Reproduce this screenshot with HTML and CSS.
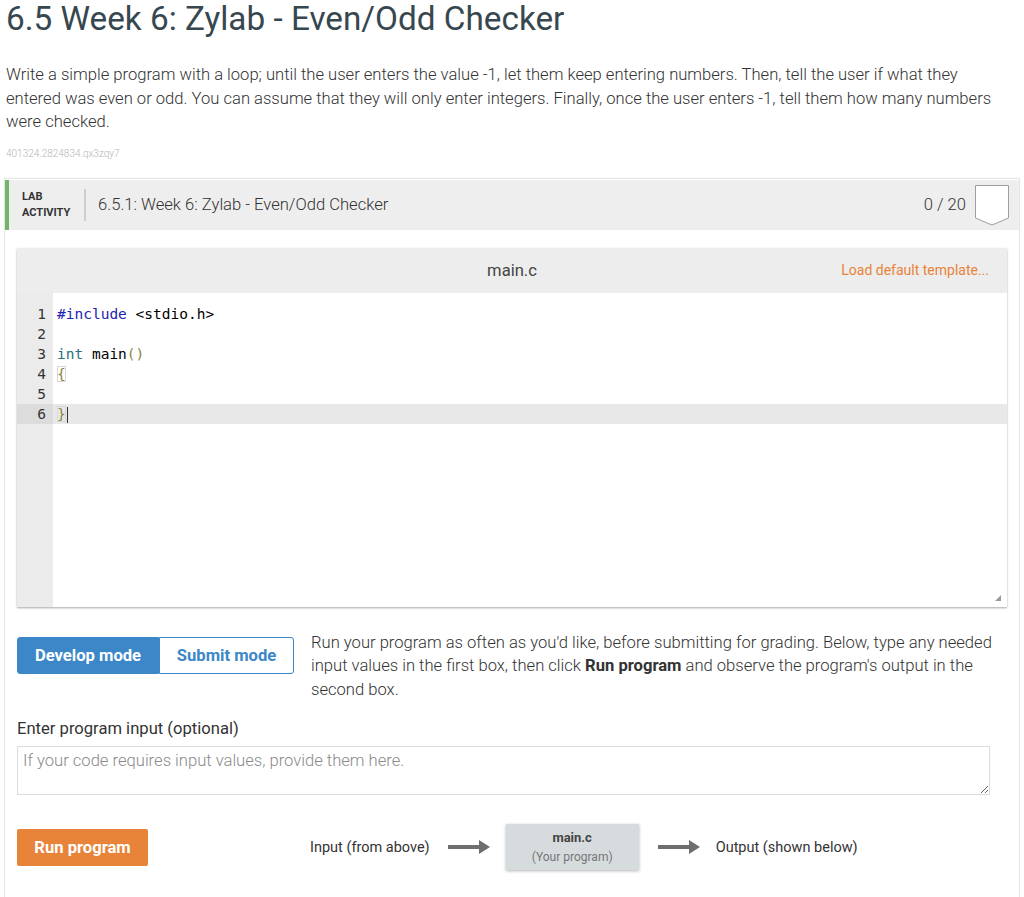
FILE: index.html
```html
<!DOCTYPE html>
<html>
<head>
<meta charset="utf-8">
<link rel="stylesheet" href="styles.css">
</head>
<body>
<div class="page">
  <h1 class="title">6.5 Week 6: Zylab - Even/Odd Checker</h1>
  <p class="desc">Write a simple program with a loop; until the user enters the value -1, let them keep entering numbers. Then, tell the user if what they entered was even or odd. You can assume that they will only enter integers. Finally, once the user enters -1, tell them how many numbers were checked.</p>
  <div class="resid">401324.2824834.qx3zqy7</div>

  <div class="lab">
    <div class="lab-head">
      <div class="lab-label">LAB<br>ACTIVITY</div>
      <div class="lab-sep"></div>
      <div class="lab-title">6.5.1: Week 6: Zylab - Even/Odd Checker</div>
      <div class="lab-score">0 / 20</div>
      <svg class="badge" width="34" height="41" viewBox="0 0 34 41">
        <path d="M0.5 0.5 H33.5 V33 L17 40 L0.5 33 Z" fill="#fff" stroke="#9e9e9e" stroke-width="1"/>
      </svg>
    </div>

    <div class="lab-body">
      <div class="editor">
        <div class="editor-head">
          <span class="fname">main.c</span>
          <span class="load">Load default template...</span>
        </div>
        <div class="code">
          <div class="gutter">
            <div class="gl">1</div>
            <div class="gl">2</div>
            <div class="gl">3</div>
            <div class="gl">4</div>
            <div class="gl">5</div>
            <div class="gl active">6</div>
          </div>
          <div class="lines">
            <div class="cl"><span class="k-inc">#include</span> &lt;stdio.h&gt;</div>
            <div class="cl">&nbsp;</div>
            <div class="cl"><span class="k-type">int</span> main<span class="k-par">()</span></div>
            <div class="cl"><span class="k-brace">{</span></div>
            <div class="cl">&nbsp;</div>
            <div class="cl active"><span class="k-brace">}</span><span class="cursor"></span></div>
          </div>
          <div class="grip"></div>
        </div>
      </div>

      <div class="mode-row">
        <div class="modes">
          <button class="mode mode-on">Develop mode</button>
          <button class="mode mode-off">Submit mode</button>
        </div>
        <p class="mode-text">Run your program as often as you'd like, before submitting for grading. Below, type any needed input values in the first box, then click <b>Run program</b> and observe the program's output in the second box.</p>
      </div>

      <div class="input-label">Enter program input (optional)</div>
      <textarea class="input-box" placeholder="If your code requires input values, provide them here."></textarea>

      <div class="run-row">
        <button class="run">Run program</button>
        <div class="flow">
          <span class="flow-text">Input (from above)</span>
          <svg class="arrow arrow-1" width="42" height="14" viewBox="0 0 42 14"><rect x="0" y="5" width="32" height="4" fill="#6f6f6f"/><path d="M31 0 L42 7 L31 14 Z" fill="#6f6f6f"/></svg>
          <div class="prog">
            <div class="prog-name">main.c</div>
            <div class="prog-sub">(Your program)</div>
          </div>
          <svg class="arrow arrow-2" width="42" height="14" viewBox="0 0 42 14"><rect x="0" y="5" width="32" height="4" fill="#6f6f6f"/><path d="M31 0 L42 7 L31 14 Z" fill="#6f6f6f"/></svg>
          <span class="flow-text">Output (shown below)</span>
        </div>
      </div>
    </div>
  </div>
</div>
</body>
</html>
```

FILE: styles.css
```css
* { box-sizing: border-box; }
html, body { margin: 0; padding: 0; background: #fff; }
body { font-family: Roboto, "Noto Sans", sans-serif; color: #333; }

.page { padding: 0 4px 0 4px; }

.title {
  margin: 0 0 0 2px;
  font-size: 33.3px;
  font-weight: 400;
  line-height: 38px;
  color: #37474f;
}

.desc {
  margin: 25px 0 0 2px;
  font-size: 16.6px;
  font-weight: 300;
  line-height: 23.5px;
  color: #333;
  max-width: 1000px;
}

.resid {
  margin: 14px 0 0 2px;
  font-size: 10px;
  font-weight: 300;
  color: #b5b5b5;
  line-height: 12px;
}

.lab {
  margin-top: 18px;
  border: 1px solid #e6e6e6;
  border-bottom: none;
  box-shadow: 0 0 2px rgba(0,0,0,0.06);
  padding-bottom: 120px;
}

.lab-head {
  display: flex;
  align-items: center;
  height: 50px;
  margin-top: 1px;
  background: #eeeeee;
  border-left: 4px solid #73b566;
  padding: 0 10px 0 13px;
}

.lab-label {
  font-size: 11px;
  font-weight: 700;
  line-height: 16px;
  color: #333;
  width: 54px;
}

.lab-sep {
  width: 2px;
  height: 32px;
  background: #cfcfcf;
  margin: 0 12px 0 8px;
}

.lab-title {
  flex: 1;
  font-size: 16.6px;
  font-weight: 300;
  color: #333;
}

.lab-score {
  font-size: 16.6px;
  font-weight: 300;
  color: #333;
  margin-right: 9px;
}

.badge { display: block; margin-top: 2px; }

.lab-body { padding: 18px 12px 0 12px; }

.editor {
  box-shadow: 0 1px 2px rgba(0,0,0,0.35);
}

.editor-head {
  height: 45px;
  background: #ededed;
  display: flex;
  align-items: center;
  justify-content: center;
  position: relative;
}

.fname {
  font-size: 16.6px;
  font-weight: 400;
  color: #444;
}

.load {
  position: absolute;
  right: 18px;
  top: 0;
  line-height: 45px;
  font-size: 14px;
  font-weight: 400;
  color: #e8833a;
}

.code {
  display: flex;
  height: 314px;
  background: #fff;
  position: relative;
  font-family: "DejaVu Sans Mono", "Liberation Mono", monospace;
  font-size: 14.5px;
}

.gutter {
  width: 36px;
  background: #ebebeb;
  padding-top: 11px;
  color: #333;
}

.gl {
  height: 20px;
  line-height: 20px;
  text-align: right;
  padding-right: 7px;
}

.gl.active { background: #dcdcdc; }

.lines { flex: 1; padding-top: 11px; }

.cl {
  height: 20px;
  line-height: 20px;
  padding-left: 4px;
  color: #000;
  white-space: pre;
}

.cl.active { background: #e8e8e8; }

.k-inc { color: #1c24b0; }
.k-type { color: #2b7380; }
.k-par { color: #8b8644; }
.k-brace {
  color: #8b8644;
  outline: 1px solid #d8d8d8;
  outline-offset: -1px;
}

.cursor {
  display: inline-block;
  width: 1px;
  height: 16px;
  background: #333;
  vertical-align: middle;
  margin-left: 1px;
}

.grip {
  position: absolute;
  right: 6px;
  bottom: 6px;
  width: 0;
  height: 0;
  border-left: 6px solid transparent;
  border-bottom: 6px solid #9a9a9a;
}

.mode-row {
  display: flex;
  align-items: flex-start;
  margin-top: 24px;
}

.modes {
  display: flex;
  margin-top: 6px;
  flex: none;
}

.mode {
  font-family: Roboto, sans-serif;
  font-size: 16.6px;
  font-weight: 700;
  height: 37px;
  border: 1px solid #3b87c8;
  margin: 0;
  padding: 0;
  cursor: pointer;
}

.mode-on {
  width: 142px;
  background: #3b87c8;
  color: #fff;
  border-radius: 3px 0 0 3px;
}

.mode-off {
  width: 135px;
  background: #fff;
  color: #3b87c8;
  border-radius: 0 3px 3px 0;
}

.mode-text {
  margin: 0 0 0 17px;
  font-size: 16.6px;
  font-weight: 300;
  line-height: 23.5px;
  color: #333;
}

.mode-text b { font-weight: 700; }

.input-label {
  margin-top: 18px;
  font-size: 16.6px;
  font-weight: 400;
  line-height: 20px;
  color: #333;
}

.input-box {
  display: block;
  width: calc(100% - 17px);
  height: 49px;
  margin-top: 7px;
  border: 1px solid #dcdcdc;
  border-radius: 0;
  padding: 4px 5px;
  font-family: Roboto, sans-serif;
  font-size: 16.6px;
  font-weight: 300;
  resize: vertical;
  outline: none;
}

.input-box::placeholder { color: #8a8a8a; font-weight: 300; }

.run-row {
  display: flex;
  align-items: center;
  margin-top: 29px;
}

.run {
  width: 131px;
  height: 37px;
  background: #e8833a;
  border: none;
  border-radius: 2px;
  color: #fff;
  font-family: Roboto, sans-serif;
  font-size: 16.6px;
  font-weight: 700;
  margin: 0;
  padding: 0;
}

.flow {
  display: flex;
  align-items: center;
  margin-left: 162px;
}

.flow-text {
  font-size: 14.5px;
  font-weight: 400;
  color: #333;
}

.arrow { display: block; }
.arrow-1 { margin: 0 16px 0 18px; }
.arrow-2 { margin: 0 16px 0 19px; }

.prog {
  width: 133px;
  height: 46px;
  background: #d6dbde;
  box-shadow: 0 1px 3px rgba(0,0,0,0.3);
  text-align: center;
  padding-top: 6px;
}

.prog-name {
  font-size: 13px;
  font-weight: 700;
  color: #444;
  line-height: 16px;
}

.prog-sub {
  font-size: 12px;
  font-weight: 400;
  color: #777;
  line-height: 18px;
  margin-top: 2px;
}
```
